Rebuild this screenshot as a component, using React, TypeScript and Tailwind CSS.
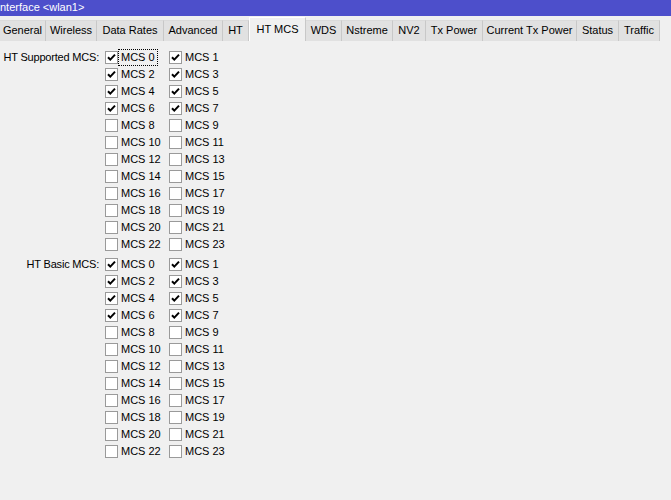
import React from "react";

const tabs: { label: string; w: string; active?: boolean }[] = [
	{ label: "General", w: "w-[46px]" },
	{ label: "Wireless", w: "w-[51px]" },
	{ label: "Data Rates", w: "w-[67px]" },
	{ label: "Advanced", w: "w-[59px]" },
	{ label: "HT", w: "w-[26px]" },
	{ label: "HT MCS", w: "w-[57px]", active: true },
	{ label: "WDS", w: "w-[36px]" },
	{ label: "Nstreme", w: "w-[51px]" },
	{ label: "NV2", w: "w-[33px]" },
	{ label: "Tx Power", w: "w-[57px]" },
	{ label: "Current Tx Power", w: "w-[94px]" },
	{ label: "Status", w: "w-[42px]" },
	{ label: "Traffic", w: "w-[41px]" },
];

const Check = ({ checked }: { checked: boolean }) => (
	<span className="flex h-[13px] w-[13px] shrink-0 items-center justify-center border border-[#9a9a9a] bg-white">
		{checked && (
			<svg width="11" height="11" viewBox="0 0 11 11">
				<path d="M2 5.2 L4.3 7.6 L9 2.6" fill="none" stroke="#000" strokeWidth="2" />
			</svg>
		)}
	</span>
);

const McsGroup = ({ label, focusFirst }: { label: string; focusFirst?: boolean }) => (
	<div className="flex">
		<div className="h-[17px] w-[101px] shrink-0 pr-[2px] text-right leading-[17px] tracking-[-0.2px]">{label}</div>
		<div className="grid grid-cols-[64px_64px]">
			{Array.from({ length: 24 }, (_, i) => (
				<div key={i} className="flex h-[17px] items-center pl-[4px]">
					<Check checked={i < 8} />
					<span
						className={
							i === 0 && focusFirst
								? "border border-dotted border-black px-[2px] leading-[15px]"
								: "border border-transparent px-[2px] leading-[15px]"
						}
					>
						MCS {i}
					</span>
				</div>
			))}
		</div>
	</div>
);

export default function App() {
	return (
		<div className="h-[500px] w-[671px] overflow-hidden bg-[#f0f0f0] font-['Liberation_Sans',Arial,sans-serif] text-[11px] text-black">
			<div className="h-[16px] bg-[#4d4fcb] leading-[15px] text-white">nterface &lt;wlan1&gt;</div>

			<div className="mt-[1px] flex h-[24px] items-end">
				{tabs.map((tab) =>
					tab.active ? (
						<div
							key={tab.label}
							className={`${tab.w} flex h-[24px] shrink-0 items-center justify-center border-t border-r border-l border-t-white border-l-white border-r-[#c8c8c8] bg-[#f0f0f0]`}
						>
							{tab.label}
						</div>
					) : (
						<div
							key={tab.label}
							className={`${tab.w} flex h-[21px] shrink-0 items-center justify-center border-t border-r border-[#c8c8c8] border-t-[#dadada] bg-[#e1e1e1] pb-[1px]`}
						>
							{tab.label}
						</div>
					),
				)}
			</div>

			<div className="flex flex-col gap-[3px] pt-[8px]">
				<McsGroup label="HT Supported MCS:" focusFirst />
				<McsGroup label="HT Basic MCS:" />
			</div>
		</div>
	);
}
